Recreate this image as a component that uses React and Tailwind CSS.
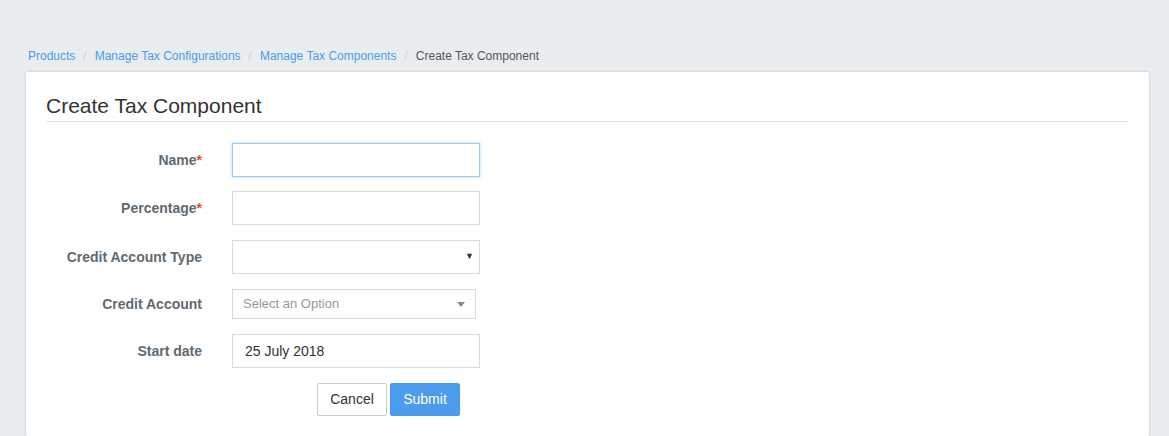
import React from 'react';

export default function App() {
  const rows = [
    { label: 'Name', required: true, type: 'input', focus: true },
    { label: 'Percentage', required: true, type: 'input' },
    { label: 'Credit Account Type', type: 'select' },
    { label: 'Credit Account', type: 'select2' },
    { label: 'Start date', type: 'input', value: '25 July 2018' },
  ];

  return (
    <div
      className="min-h-[436px] bg-[#eaedf0] pt-[47px] px-[26px] text-[#333]"
      style={{ fontFamily: '"Liberation Sans", Arial, sans-serif' }}
    >
      {/* Breadcrumb */}
      <div className="flex items-center text-[12px] leading-[18px] pl-[2px] h-[18px]">
        <a className="text-[#4a9de8]">Products</a>
        <span className="px-[8px] text-[#ccc]">/</span>
        <a className="text-[#4a9de8]">Manage Tax Configurations</a>
        <span className="px-[8px] text-[#ccc]">/</span>
        <a className="text-[#4a9de8]">Manage Tax Components</a>
        <span className="px-[8px] text-[#ccc]">/</span>
        <span className="text-[#555]">Create Tax Component</span>
      </div>

      {/* Card */}
      <div className="mt-[7px] bg-white shadow-[0_0_3px_rgba(0,0,0,0.18)] rounded-[2px] px-[20px] pt-[20px] pb-[20px] mr-[-6px]">
        <h2 className="text-[21px] leading-[28px] text-[#333] pb-[1px] border-b border-[#e3e3e3]">
          Create Tax Component
        </h2>

        <div className="mt-[21px] flex flex-col">
          {rows.map((r, i) => (
            <div
              key={i}
              className={`flex items-center ${i === 1 ? 'mt-[14px]' : i > 1 ? 'mt-[15px]' : ''}`}
            >
              <label className="w-[156px] text-right text-[14px] font-bold text-[#606a72]">
                {r.label}
                {r.required && <span className="text-[#e04a4a]">*</span>}
              </label>
              <div className="ml-[30px]">
                {r.type === 'input' && (
                  <div
                    className={`w-[248px] h-[34px] border flex items-center px-[12px] text-[14px] text-[#333] ${
                      r.focus ? 'border-[#9ecbf5] shadow-[0_0_3px_rgba(102,175,233,0.5)]' : 'border-[#d9d9d9]'
                    }`}
                  >
                    {r.value}
                  </div>
                )}
                {r.type === 'select' && (
                  <div className="w-[248px] h-[34px] border border-[#d9d9d9] flex items-center justify-end pr-[5px]">
                    <span className="text-[9px] text-[#333]">▼</span>
                  </div>
                )}
                {r.type === 'select2' && (
                  <div className="w-[244px] h-[30px] border border-[#d9d9d9] flex items-center justify-between pl-[10px] pr-[10px] text-[13px] text-[#999]">
                    <span>Select an Option</span>
                    <svg width="8" height="5" viewBox="0 0 8 5">
                      <path d="M0 0 L8 0 L4 5 Z" fill="#888" />
                    </svg>
                  </div>
                )}
              </div>
            </div>
          ))}
        </div>

        <div className="mt-[15px] flex pl-[271px] gap-[3px]">
          <button className="w-[70px] h-[33px] border border-[#ccc] rounded-[2px] bg-white text-[14px] text-[#333]">
            Cancel
          </button>
          <button className="w-[70px] h-[33px] rounded-[2px] bg-[#4c9ced] border border-[#4a97e4] text-[14px] text-white">
            Submit
          </button>
        </div>
      </div>
    </div>
  );
}
